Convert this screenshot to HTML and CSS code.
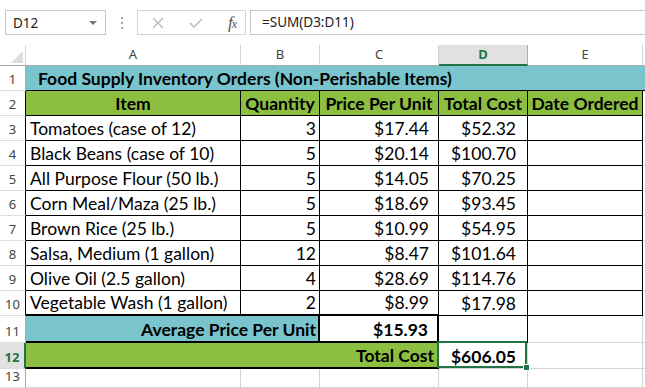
FILE: index.html
```html
<!DOCTYPE html>
<html lang="en">
<head>
  <meta charset="UTF-8">
  <title>Food Supply Inventory Orders</title>
  <link rel="stylesheet" href="styles.css">
</head>
<body>
  <div class="fbar">
    <div class="namebox"><span>D12</span><span class="caret"></span></div>
    <svg class="grip" width="4" height="14" viewBox="0 0 4 14">
      <rect x="1" y="1" width="2" height="2" fill="#a6a6a6"/>
      <rect x="1" y="6" width="2" height="2" fill="#a6a6a6"/>
      <rect x="1" y="11" width="2" height="2" fill="#a6a6a6"/>
    </svg>
    <div class="fxbox">
      <svg width="12" height="12" viewBox="0 0 12 12">
        <path d="M1 1L11 11M11 1L1 11" stroke="#b8b8b8" stroke-width="1.3" fill="none"/>
      </svg>
      <svg width="14" height="12" viewBox="0 0 14 12">
        <path d="M1 6L5 10L13 2" stroke="#b8b8b8" stroke-width="1.5" fill="none"/>
      </svg>
      <span class="fx">f<small>x</small></span>
    </div>
    <div class="formula">=SUM(D3:D11)</div>
  </div>

  <div class="sheet">
    <div class="corner"><svg width="12" height="12" viewBox="0 0 12 12"><path d="M12 0V12H0Z" fill="#dcdcdc"/></svg></div>
    <div class="ch">A</div>
    <div class="ch">B</div>
    <div class="ch">C</div>
    <div class="ch sel">D</div>
    <div class="ch">E</div>
    <div class="ch"></div>

    <div class="rh">1</div>
    <div class="title">Food Supply Inventory Orders (Non-Perishable Items)</div>

    <div class="rh bl">2</div>
    <div class="hd">Item</div>
    <div class="hd">Quantity</div>
    <div class="hd">Price Per Unit</div>
    <div class="hd">Total Cost</div>
    <div class="hd">Date Ordered</div>
    <div></div>

    <div class="rh bl">3</div>
    <div class="b">Tomatoes (case of 12)</div>
    <div class="b num">3</div>
    <div class="b num pc">$17.44</div>
    <div class="b num pd">$52.32</div>
    <div class="b"></div>
    <div></div>

    <div class="rh bl">4</div>
    <div class="b">Black Beans (case of 10)</div>
    <div class="b num">5</div>
    <div class="b num pc">$20.14</div>
    <div class="b num pd">$100.70</div>
    <div class="b"></div>
    <div></div>

    <div class="rh bl">5</div>
    <div class="b">All Purpose Flour (50 lb.)</div>
    <div class="b num">5</div>
    <div class="b num pc">$14.05</div>
    <div class="b num pd">$70.25</div>
    <div class="b"></div>
    <div></div>

    <div class="rh bl">6</div>
    <div class="b">Corn Meal/Maza (25 lb.)</div>
    <div class="b num">5</div>
    <div class="b num pc">$18.69</div>
    <div class="b num pd">$93.45</div>
    <div class="b"></div>
    <div></div>

    <div class="rh bl">7</div>
    <div class="b">Brown Rice (25 lb.)</div>
    <div class="b num">5</div>
    <div class="b num pc">$10.99</div>
    <div class="b num pd">$54.95</div>
    <div class="b"></div>
    <div></div>

    <div class="rh bl">8</div>
    <div class="b">Salsa, Medium (1 gallon)</div>
    <div class="b num">12</div>
    <div class="b num pc">$8.47</div>
    <div class="b num pd">$101.64</div>
    <div class="b"></div>
    <div></div>

    <div class="rh bl">9</div>
    <div class="b">Olive Oil (2.5 gallon)</div>
    <div class="b num">4</div>
    <div class="b num pc">$28.69</div>
    <div class="b num pd">$114.76</div>
    <div class="b"></div>
    <div></div>

    <div class="rh bl">10</div>
    <div class="b tb">Vegetable Wash (1 gallon)</div>
    <div class="b tb num">2</div>
    <div class="b tb num pc">$8.99</div>
    <div class="b num pd">$17.98</div>
    <div class="b"></div>
    <div></div>

    <div class="rh">11</div>
    <div class="avg">Average Price Per Unit</div>
    <div class="avgval">$15.93</div>
    <div class="b"></div>
    <div></div>
    <div></div>

    <div class="rh cur">12</div>
    <div class="total">Total Cost</div>
    <div class="active">$606.05<span class="selbox"><span class="handle"></span></span></div>
    <div></div>
    <div></div>

    <div class="rh">13</div>
    <div></div>
    <div></div>
    <div></div>
    <div></div>
    <div></div>
    <div></div>
  </div>
</body>
</html>
```

FILE: styles.css
```css
body {
  margin: 0;
  width: 645px;
  height: 388px;
  overflow: hidden;
  background: #fff;
  font-family: "Noto Sans", "Open Sans", sans-serif;
}

/* formula bar */
.fbar {
  display: flex;
  align-items: flex-start;
  height: 45px;
  padding-top: 10px;
  box-sizing: border-box;
}
.namebox {
  display: flex;
  align-items: center;
  justify-content: space-between;
  width: 101px;
  height: 25px;
  margin-left: 5px;
  padding: 0 7px 0 7px;
  box-sizing: border-box;
  border: 1px solid #c6c6c6;
  font-size: 13.5px;
  color: #222;
}
.caret {
  width: 0;
  height: 0;
  border-left: 4px solid transparent;
  border-right: 4px solid transparent;
  border-top: 4px solid #777;
  margin-right: 1px;
}
.grip {
  margin: 6px 13px 0 14px;
}
.fxbox {
  display: flex;
  align-items: center;
  justify-content: space-between;
  width: 109px;
  height: 25px;
  padding: 0 9px 0 14px;
  box-sizing: border-box;
  border: 1px solid #d4d4d4;
}
.fx {
  font-family: "Liberation Serif", serif;
  font-style: italic;
  font-size: 17px;
  line-height: 1;
  color: #555;
  letter-spacing: -1px;
}
.fx small {
  font-size: 12px;
}
.formula {
  flex: 1;
  height: 25px;
  margin-left: 4px;
  padding-left: 11px;
  box-sizing: border-box;
  border: 1px solid #c6c6c6;
  border-right: none;
  font-size: 13.5px;
  line-height: 23px;
  color: #222;
}

/* sheet grid */
.sheet {
  display: grid;
  grid-template-columns: 26px 215px 79px 119px 89px 115px 1fr;
  grid-template-rows: 21px repeat(10, 25px) 27px 26px 1fr;
  height: 343px;
}
.sheet > div {
  position: relative;
  display: flex;
  align-items: flex-end;
  box-sizing: border-box;
  border-right: 1px solid #d4d4d4;
  border-bottom: 1px solid #d4d4d4;
  padding: 0 4px 1px 4px;
  font-family: Lato, "Liberation Sans", sans-serif;
  font-size: 17.5px;
  line-height: 1.2;
  color: #000;
  white-space: nowrap;
}
.sheet > .corner {
  align-items: flex-end;
  justify-content: flex-end;
  padding: 0 2px 2px 0;
  border-bottom-color: #ababab;
}
.sheet > .ch {
  align-items: center;
  justify-content: center;
  padding: 0;
  font-family: "Noto Sans", "Open Sans", sans-serif;
  font-size: 13px;
  color: #444;
  border-bottom-color: #ababab;
}
.sheet > .ch.sel {
  background: #e1e1e1;
  border-bottom: 2px solid #217346;
  border-right-color: #ababab;
  color: #217346;
  font-weight: bold;
  padding-top: 1px;
}
.sheet > .rh {
  justify-content: center;
  padding: 0 0 2px 0;
  font-family: "Noto Sans", "Open Sans", sans-serif;
  font-size: 13px;
  color: #444;
  border-right-color: #ababab;
  border-bottom-color: #dedede;
}
.sheet > .rh.bl {
  border-right-color: #000;
}
.sheet > .rh.cur {
  background: #e1e1e1;
  color: #217346;
  font-weight: bold;
  border-right: 2px solid #217346;
}

.sheet > .title {
  grid-column: 2 / -1;
  background: #7ac5cd;
  border-right: none;
  border-bottom-color: #000;
  padding-left: 12px;
  font-weight: bold;
}
.sheet > .hd {
  justify-content: center;
  padding: 0 0 1px 0;
  background: #8cbf3f;
  border-right-color: #000;
  border-bottom-color: #000;
  font-weight: bold;
}
.sheet > .b {
  border-right-color: #000;
  border-bottom-color: #000;
}
.sheet > .tb {
  border-bottom: 2px solid #000;
}
.sheet > .num {
  justify-content: flex-end;
  padding-right: 3px;
}
.sheet > .pc {
  padding-right: 9px;
}
.sheet > .pd {
  padding-right: 11px;
}

.sheet > .avg {
  grid-column: 2 / 4;
  justify-content: flex-end;
  padding-right: 2px;
  background: #7ac5cd;
  border-right: 2px solid #000;
  border-bottom: 2px solid #000;
  font-weight: bold;
}
.sheet > .avgval {
  justify-content: flex-end;
  padding-right: 9px;
  border-right: 2px solid #000;
  border-bottom: 2px solid #000;
  font-weight: bold;
}
.sheet > .total {
  grid-column: 2 / 5;
  justify-content: flex-end;
  padding-right: 3px;
  background: #8cbf3f;
  border-right: 2px solid #000;
  border-bottom: 2px solid #000;
  font-weight: bold;
}
.sheet > .active {
  justify-content: flex-end;
  padding-right: 11px;
  font-weight: bold;
}
.selbox {
  position: absolute;
  left: -2px;
  top: -2px;
  right: 0;
  bottom: 0;
  border: 2px solid #217346;
  z-index: 2;
}
.handle {
  position: absolute;
  right: -5px;
  bottom: -5px;
  width: 5px;
  height: 5px;
  background: #217346;
  border: 1px solid #fff;
}
```
